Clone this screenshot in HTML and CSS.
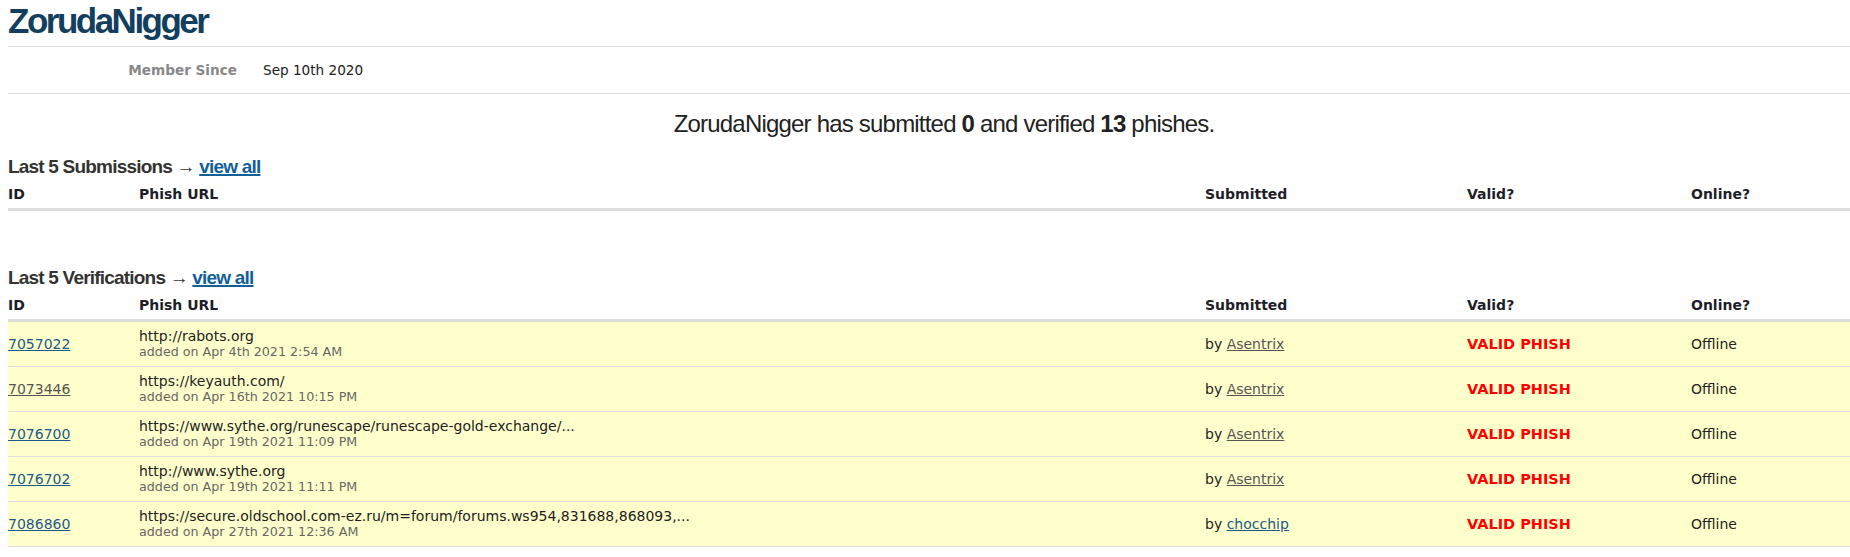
FILE: index.html
```html
<!DOCTYPE html>
<html lang="en">
<head>
    <meta charset="UTF-8">
    <title>PhishTank | User Profile</title>
    <link rel="stylesheet" href="styles.css">
</head>
<body>
    <h1 class="username">ZorudaNigger</h1>

    <table class="profile">
        <tr>
            <th>Member Since</th>
            <td>Sep 10th 2020</td>
        </tr>
    </table>

    <p class="summary">ZorudaNigger has submitted <b>0</b> and verified <b>13</b> phishes.</p>

    <!-- Submissions -->
    <h2 class="section">Last 5 Submissions &rarr; <a href="#">view all</a></h2>
    <table class="data">
        <thead>
            <tr>
                <th class="c-id">ID</th>
                <th class="c-url">Phish URL</th>
                <th class="c-sub">Submitted</th>
                <th class="c-valid">Valid?</th>
                <th class="c-online">Online?</th>
            </tr>
        </thead>
        <tbody></tbody>
    </table>

    <!-- Verifications -->
    <h2 class="section second">Last 5 Verifications &rarr; <a href="#">view all</a></h2>
    <table class="data">
        <thead>
            <tr>
                <th class="c-id">ID</th>
                <th class="c-url">Phish URL</th>
                <th class="c-sub">Submitted</th>
                <th class="c-valid">Valid?</th>
                <th class="c-online">Online?</th>
            </tr>
        </thead>
        <tbody>
            <tr>
                <td><a href="#">7057022</a></td>
                <td>http://rabots.org<br><span class="added">added on Apr 4th 2021 2:54 AM</span></td>
                <td>by <a href="#" class="visited">Asentrix</a></td>
                <td class="valid">VALID PHISH</td>
                <td>Offline</td>
            </tr>
            <tr>
                <td><a href="#" class="visited">7073446</a></td>
                <td>https://keyauth.com/<br><span class="added">added on Apr 16th 2021 10:15 PM</span></td>
                <td>by <a href="#" class="visited">Asentrix</a></td>
                <td class="valid">VALID PHISH</td>
                <td>Offline</td>
            </tr>
            <tr>
                <td><a href="#">7076700</a></td>
                <td>https://www.sythe.org/runescape/runescape-gold-exchange/...<br><span class="added">added on Apr 19th 2021 11:09 PM</span></td>
                <td>by <a href="#" class="visited">Asentrix</a></td>
                <td class="valid">VALID PHISH</td>
                <td>Offline</td>
            </tr>
            <tr>
                <td><a href="#">7076702</a></td>
                <td>http://www.sythe.org<br><span class="added">added on Apr 19th 2021 11:11 PM</span></td>
                <td>by <a href="#" class="visited">Asentrix</a></td>
                <td class="valid">VALID PHISH</td>
                <td>Offline</td>
            </tr>
            <tr>
                <td><a href="#">7086860</a></td>
                <td>https://secure.oldschool.com-ez.ru/m=forum/forums.ws954,831688,868093,...<br><span class="added">added on Apr 27th 2021 12:36 AM</span></td>
                <td>by <a href="#">chocchip</a></td>
                <td class="valid">VALID PHISH</td>
                <td>Offline</td>
            </tr>
        </tbody>
    </table>
</body>
</html>
```

FILE: styles.css
```css
body {
    margin: 0 0 0 8px;
    font-family: "DejaVu Sans", Verdana, sans-serif;
    font-size: 14px;
    color: #222;
    background: #fff;
}

a {
    color: #1a5a8a;
}

a.visited {
    color: #555;
}

/* Page title */
.username {
    margin: 0;
    height: 46px;
    font-family: "Liberation Sans", Arial, sans-serif;
    font-size: 35px;
    font-weight: bold;
    letter-spacing: -2.5px;
    line-height: 42px;
    color: #133f5f;
    border-bottom: 1px solid #ddd;
}

/* Member since block */
.profile {
    width: 100%;
    border-collapse: collapse;
    border-bottom: 1px solid #ddd;
    font-size: 13.6px;
    line-height: 16px;
}

.profile th {
    width: 229px;
    padding: 15px 26px 15px 0;
    text-align: right;
    color: #888;
    font-weight: bold;
}

.profile td {
    padding: 15px 0;
    color: #222;
}

.summary {
    margin: 0;
    padding: 15px 0 0 30px;
    text-align: center;
    font-family: "Liberation Sans", Arial, sans-serif;
    font-size: 24px;
    letter-spacing: -0.8px;
    line-height: 30px;
    color: #222;
}

/* Section headings */
.section {
    margin: 16px 0 0;
    font-family: "Liberation Sans", Arial, sans-serif;
    font-size: 19px;
    font-weight: bold;
    letter-spacing: -0.8px;
    line-height: 24px;
    color: #333;
}

.section a {
    color: #12609a;
    text-decoration-thickness: 2px;
}

.section.second {
    margin-top: 55px;
}

/* Data tables */
.data {
    width: 100%;
    border-collapse: collapse;
}

.data th {
    text-align: left;
    font-weight: bold;
    color: #1e1e28;
    line-height: 16px;
    padding: 7px 0 6px;
    border-bottom: 3px solid #ddd;
}

.data td {
    background: #ffffcc;
    padding: 7px 0;
    line-height: 15px;
    border-bottom: 1px solid #ddd;
    vertical-align: middle;
    color: #222;
}

.c-id { width: 131px; }
.c-url { width: 1066px; }
.c-sub { width: 262px; }
.c-valid { width: 224px; }

.added {
    font-size: 12.7px;
    color: #666;
}

.valid {
    color: #ff0000 !important;
    font-size: 14.5px;
    font-weight: bold;
}
```
